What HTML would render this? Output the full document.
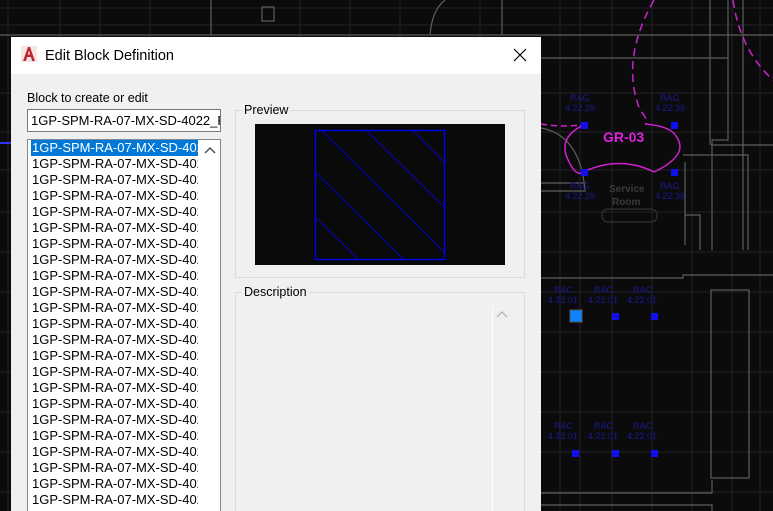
<!DOCTYPE html>
<html><head><style>
*{margin:0;padding:0;box-sizing:border-box}
html,body{width:773px;height:511px;overflow:hidden}
body{background:#0b0b0c;font-family:"Liberation Sans",sans-serif;position:relative}
#bg{position:absolute;left:0;top:0}
.dlg{position:absolute;left:11px;top:37px;width:530px;height:474px;background:#f0f0f0;overflow:hidden}
.tb{position:absolute;left:0;top:0;width:530px;height:37px;background:#fff}
.t{position:absolute;font-size:14.5px;color:#000}
.lst{position:absolute;left:16px;top:102px;width:194px;height:390px;background:#fff;border:1px solid #828790}
.it{position:absolute;left:3px;font-size:13px;color:#000;white-space:nowrap;width:167px;overflow:hidden;height:16px;line-height:16px;padding-left:1px}
.grp{position:absolute;border:1px solid #dcdcdc}
</style></head><body>
<svg id="bg" width="773" height="511">
<g stroke="#22222a" stroke-width="1">
<line x1="0" y1="8" x2="773" y2="8"/><line x1="0" y1="25" x2="773" y2="25"/>
<line x1="0" y1="93" x2="773" y2="93"/><line x1="0" y1="132" x2="773" y2="132"/><line x1="0" y1="170" x2="773" y2="170"/>
<line x1="0" y1="212" x2="773" y2="212"/><line x1="0" y1="252" x2="773" y2="252"/><line x1="0" y1="292" x2="773" y2="292"/>
<line x1="0" y1="332" x2="773" y2="332"/><line x1="0" y1="372" x2="773" y2="372"/><line x1="0" y1="412" x2="773" y2="412"/>
<line x1="0" y1="452" x2="773" y2="452"/><line x1="0" y1="492" x2="773" y2="492"/>
<line x1="8" y1="0" x2="8" y2="511"/><line x1="60" y1="0" x2="60" y2="37"/><line x1="100" y1="0" x2="100" y2="37"/>
<line x1="150" y1="0" x2="150" y2="37"/><line x1="300" y1="0" x2="300" y2="37"/><line x1="350" y1="0" x2="350" y2="37"/>
<line x1="400" y1="0" x2="400" y2="37"/><line x1="480" y1="0" x2="480" y2="37"/>
<line x1="560" y1="0" x2="560" y2="511"/><line x1="580" y1="0" x2="580" y2="511"/><line x1="612" y1="0" x2="612" y2="511"/>
<line x1="652" y1="0" x2="652" y2="511"/><line x1="692" y1="0" x2="692" y2="511"/><line x1="732" y1="0" x2="732" y2="511"/><line x1="760" y1="0" x2="760" y2="511"/>
</g>
<g stroke="#5e5e5e" fill="none" stroke-width="1.2">
<line x1="211" y1="0" x2="211" y2="35"/><line x1="0" y1="35" x2="773" y2="35"/>
<rect x="262" y="7" width="12" height="14"/>
<path d="M430 35 Q432 10 445 0"/>
<line x1="502" y1="0" x2="502" y2="35"/><line x1="710" y1="0" x2="710" y2="145"/><line x1="743" y1="0" x2="743" y2="250"/>
<line x1="711" y1="145" x2="773" y2="145"/><line x1="541" y1="58" x2="728" y2="58"/><line x1="728" y1="0" x2="728" y2="58"/>
<path d="M541 128 Q580 135 585 190"/><line x1="541" y1="183" x2="586" y2="183"/><line x1="541" y1="191" x2="586" y2="191"/>
<path d="M728 58 V140 H712 V250"/><path d="M683 155 H748 V250"/><path d="M685 162 V245"/>
<path d="M685 210 V215 H700 V250"/>
<rect x="711" y="290" width="38" height="188"/>
<path d="M541 278 H683 V275 H773"/><path d="M541 493 H712 V480"/><path d="M541 505 H712 V511"/>
</g>
<g stroke="#d020d0" fill="none" stroke-width="1.5">
<path d="M586 124 Q560 135 566 155 Q575 178 583 172 Q620 155 654 172 Q690 155 676 136 Q670 126 645 124"/>
<path d="M541 124 Q565 128 586 124" stroke-dasharray="6 4"/>
<path d="M654 0 Q620 60 640 110 Q650 122 645 124" stroke-dasharray="8 5"/>
<path d="M733 0 Q740 50 773 80" stroke-dasharray="8 5"/>
</g>
<text x="603" y="142" fill="#e020e0" font-size="14" font-weight="bold" font-family="Liberation Sans">GR-03</text>
<g fill="#1a1a90" font-size="9" font-family="Liberation Sans">
<text x="570" y="101">RAG</text><text x="565" y="111">4.22.39</text>
<text x="660" y="101">RAG</text><text x="655" y="111">4.22.39</text>
<text x="570" y="189">RAG</text><text x="565" y="199">4.22.39</text>
<text x="660" y="189">RAG</text><text x="655" y="199">4.22.39</text>
<text x="554" y="293">RAC</text><text x="548" y="303">4.22.01</text><text x="594" y="293">RAC</text><text x="588" y="303">4.22.01</text><text x="633" y="293">RAC</text><text x="627" y="303">4.22.01</text>
<text x="554" y="429">RAC</text><text x="548" y="439">4.22.01</text><text x="594" y="429">RAC</text><text x="588" y="439">4.22.01</text><text x="633" y="429">RAC</text><text x="627" y="439">4.22.01</text>
</g>
<g fill="#3a3a3a" font-size="10" font-weight="bold"><text x="609" y="192">Service</text><text x="612" y="205">Room</text></g>
<rect x="602" y="209" width="55" height="13" rx="6" fill="none" stroke="#3a3a3a"/>
<g fill="#1010ee"><rect x="581" y="122" width="7" height="7"/><rect x="671" y="122" width="7" height="7"/><rect x="581" y="169" width="7" height="7"/><rect x="671" y="169" width="7" height="7"/>
<rect x="612" y="313" width="7" height="7"/><rect x="651" y="313" width="7" height="7"/><rect x="572" y="450" width="7" height="7"/><rect x="612" y="450" width="7" height="7"/><rect x="651" y="450" width="7" height="7"/></g>
<rect x="570" y="310" width="12" height="12" fill="#0a84ff" stroke="#555"/>
<line x1="0" y1="143" x2="11" y2="143" stroke="#3030ff" stroke-width="2"/>
</svg>
<div class="dlg">
<div class="tb">
<svg style="position:absolute;left:10px;top:9px" width="16" height="16"><rect width="16" height="16" fill="#f5e5e5"/><path d="M2 15 L7 1 H9 L14 15 H11 L10 11 H6 L5 15Z M6.8 8.5 H9.2 L8 4.5Z" fill="#c0282e"/></svg>
<div class="t" style="left:34px;top:11px;font-size:14.5px">Edit Block Definition</div>
<svg style="position:absolute;left:502px;top:11px" width="14" height="14"><path d="M1 1L13 13M13 1L1 13" stroke="#000" stroke-width="1.2"/></svg>
</div>
<div class="t" style="left:16px;top:54px;font-size:12.5px">Block to create or edit</div>
<div style="position:absolute;left:16px;top:72px;width:194px;height:23px;background:#fff;border:1px solid #7a7a7a;font-size:13px;line-height:21px;padding-left:3px;overflow:hidden;white-space:nowrap">1GP-SPM-RA-07-MX-SD-4022_F</div>
<div class="lst">
<div class="it" style="top:0;background:#0078d7;color:#fff">1GP-SPM-RA-07-MX-SD-4022</div>
<svg style="position:absolute;left:176px;top:6px" width="12" height="8"><path d="M1 7L6 2L11 7" stroke="#555" stroke-width="1.5" fill="none"/></svg>
</div>
<div class="grp" style="left:224px;top:73px;width:290px;height:168px"></div>
<div class="t" style="left:231px;top:66px;background:#f0f0f0;padding:0 2px;font-size:12.5px">Preview</div>
<div style="position:absolute;left:244px;top:87px;width:250px;height:141px;background:#0a0a0a"></div>
<svg style="position:absolute;left:0;top:0" width="530" height="300">
<g stroke="#0000ff" fill="none"><rect x="304.5" y="93.5" width="129" height="129" stroke-width="1.3"/>
<path d="M310 93L434 216M355 93L434 171M401 93L434 126M304 135L392 222M304 180L347 222" stroke-width="0.8"/></g></svg>
<div class="grp" style="left:224px;top:255px;width:290px;height:240px"></div>
<div class="t" style="left:231px;top:248px;background:#f0f0f0;padding:0 2px;font-size:12.5px">Description</div>
<div style="position:absolute;left:481px;top:269px;width:1px;height:210px;background:#fff"></div>
<svg style="position:absolute;left:485px;top:273px" width="12" height="8"><path d="M1 7L6 2L11 7" stroke="#bbb" stroke-width="1.5" fill="none"/></svg>
</div>
<script>
var l=document.querySelector('.lst');for(var i=1;i<23;i++){var d=document.createElement('div');d.className='it';d.style.top=(i*16)+'px';d.textContent='1GP-SPM-RA-07-MX-SD-4022';l.appendChild(d);}
</script>
</body></html>
